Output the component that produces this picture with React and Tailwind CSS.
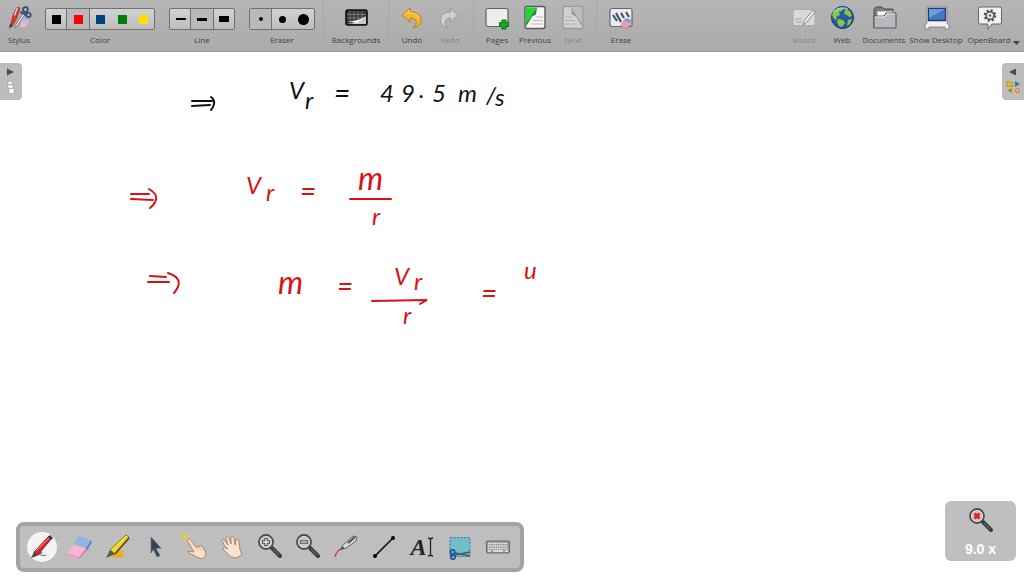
import { useState } from 'react';

const icon = 'h-7 w-7 shrink-0';

function StylusIcon() {
  return (
    <svg viewBox="0 0 28 28" className={icon} aria-hidden="true">
      <path d="M5 23l3-12 4-8 3 1-3 10-5 9z" fill="#d8392b" stroke="#8c2b24" strokeWidth=".6" />
      <path d="M9 11l3-8 1 1-3 8z" fill="#fff" opacity=".8" />
      <path d="M4 25l1-5 2 1z" fill="#333" />
      <path d="M10 22l9-14 2 1-8 12-3 3z" fill="#e9e9ed" stroke="#555" strokeWidth=".7" />
      <path d="M15 8l7 3" stroke="#35527c" strokeWidth="2" />
      <circle cx="20.5" cy="5.5" r="2.4" fill="none" stroke="#2c4a78" strokeWidth="1.6" />
      <circle cx="23.5" cy="11" r="2.2" fill="none" stroke="#2c4a78" strokeWidth="1.6" />
      <path d="M14 21l4-6 7 2-4 7-6-1z" fill="#f6b3cf" stroke="#b787a4" strokeWidth=".5" />
      <path d="M18 15l7 2-2 3-7-2z" fill="#b2c3e8" />
    </svg>
  );
}

function BackgroundsIcon() {
  return (
    <svg viewBox="0 0 28 28" className={icon} aria-hidden="true">
      <rect x="4" y="6" width="21" height="15" rx="1.5" fill="#3a3a3a" stroke="#111" strokeWidth="1.6" />
      <path d="M8 7v13M12 7v13M16 7v13M20 7v13M5 10.5h19M5 14h19" stroke="#8b8b8b" strokeWidth=".7" />
      <path d="M5 20q10-1 19-8v8z" fill="#c9c9c9" />
      <path d="M5 17q9 1 18-4l-8 6z" fill="#fff" />
    </svg>
  );
}

function UndoIcon() {
  return (
    <svg viewBox="0 0 28 28" className={icon} aria-hidden="true">
      <path d="M4.5 11L12 4v4c7 0 11 3 11 8 0 4-3 7-8 8 3-3 4-5 3-7-1-2-3-3-6-3v4z" fill="#fbb829" stroke="#c27a12" strokeLinejoin="round" />
      <path d="M6 11l5-5v3c5 0 9 1 10 5" fill="none" stroke="#ffe08a" />
    </svg>
  );
}

function RedoIcon() {
  return (
    <svg viewBox="0 0 28 28" className={icon} aria-hidden="true">
      <path d="M22 11l-7.500-7v4c-7 0-10 3-10 8 0 4 3 7 7 8-3-3-3-5-2-7 1-2 2-3 5-3v4z" fill="#cecece" stroke="#999" strokeLinejoin="round" />
    </svg>
  );
}

function PagesIcon() {
  return (
    <svg viewBox="0 0 28 28" className={icon} aria-hidden="true">
      <rect x="3" y="4.5" width="22" height="18" rx="2" fill="#ededed" stroke="#606060" strokeWidth="1.2" />
      <path d="M19 16h4v2.500h2.500v4H23V25h-4v-2.500h-2.500v-4H19z" fill="#16ac1e" stroke="#08650e" strokeWidth=".9" />
    </svg>
  );
}

function PreviousIcon() {
  return (
    <svg viewBox="0 0 28 28" className={icon} aria-hidden="true">
      <rect x="4" y="2.5" width="20" height="22" rx="2" fill="#f4f4f4" stroke="#5a5a5a" strokeWidth="1.4" />
      <path d="M5 3.500h11L5 22z" fill="#14dc28" />
      <path d="M16 3.500l-1 7-4 2-6 10V20z" fill="#4c6770" />
      <path d="M15 13h7M12 16.500h10M10 20h12" stroke="#bbb" />
    </svg>
  );
}

function NextIcon() {
  return (
    <svg viewBox="0 0 28 28" className={icon} aria-hidden="true">
      <rect x="4" y="2.5" width="20" height="22" rx="2" fill="#d1d1d1" stroke="#9b9b9b" strokeWidth="1.4" />
      <path d="M12 3.500h11V22z" fill="#bcbcbc" />
      <path d="M12 3.500l1 7 4 2 6 10V20z" fill="#969696" />
      <path d="M6 13h7M6 16.500h10M6 20h12" stroke="#b2b2b2" />
    </svg>
  );
}

function EraseIcon() {
  return (
    <svg viewBox="0 0 28 28" className={icon} aria-hidden="true">
      <rect x="3" y="4.5" width="22" height="18" rx="2" fill="#ededed" stroke="#666" strokeWidth="1.2" />
      <path d="M6 11l4 6M9 9l5 9M14 9l3 5M19 8l3 5" stroke="#3d5479" strokeWidth="2.2" />
      <path d="M14 21l4-6 7 2-4 7-6-1z" fill="#f29bb9" stroke="#b96884" strokeWidth=".5" />
      <path d="M19 14l6 2-2 3-6-2z" fill="#809fdd" />
    </svg>
  );
}

function BoardIcon() {
  return (
    <svg viewBox="0 0 28 28" className={icon} aria-hidden="true">
      <rect x="3" y="5.5" width="22" height="16" rx="1.5" fill="#d9d9d9" stroke="#aaa" />
      <path d="M5 15h7M6 18h6" stroke="#999" strokeWidth=".8" />
      <path d="M13 21l1-4L23 6l2 2-9 11z" fill="#eee" stroke="#888" />
    </svg>
  );
}

function WebIcon() {
  return (
    <svg viewBox="0 0 28 28" className={icon} aria-hidden="true">
      <circle cx="14.5" cy="13.5" r="11" fill="#245aa6" stroke="#153460" />
      <path d="M5 8c3-4 7-5 11-4l-2 3-3 1 1 3-4 2 1 3-3-1-2-4z" fill="#83c84a" />
      <path d="M17 5l5 2 2 5-3 1-2-2-3-1zM10 15l5 1 2 3-3 4-3-1-2-4zM20 16l4-1-2 5-3 2z" fill="#8cc63e" />
      <path d="M6 8q5-6 14-3" fill="none" stroke="#c1e4f7" strokeWidth="1.5" opacity=".7" />
    </svg>
  );
}

function DocumentsIcon() {
  return (
    <svg viewBox="0 0 28 28" className={icon} aria-hidden="true">
      <path d="M4 24V5l2-2h6l2 2h9v8" fill="#777a7e" stroke="#4a4a4a" />
      <path d="M7 7h16v9H7z" fill="#fff" stroke="#888" />
      <path d="M4 24V12h10l2-3h10v15z" fill="#b5b7bc" stroke="#55575b" strokeLinejoin="round" />
      <path d="M5 13h10l2-3h8" fill="none" stroke="#eee" />
    </svg>
  );
}

function DesktopIcon() {
  return (
    <svg viewBox="0 0 28 28" className={icon} aria-hidden="true">
      <path d="M5 3h20v16l2 2v4h-4v-2H7v2H3v-4l2-2z" fill="#f0f0f0" stroke="#777" strokeWidth=".8" />
      <path d="M6.500 4.500h17v12h-17z" fill="#3d79c7" stroke="#243c63" strokeWidth="1.3" />
      <path d="M7 5h16L7 14z" fill="#8ab6e7" opacity=".6" />
    </svg>
  );
}

function OpenBoardIcon() {
  return (
    <svg viewBox="0 0 28 28" className={icon} aria-hidden="true">
      <path d="M5 3h20q1.500 0 1.500 1.500v14Q26.500 20 25 20h-8l-4 5v-5H5q-1.500 0-1.500-1.500v-14Q3.500 3 5 3z" fill="#f1f1f1" stroke="#666" />
      <circle cx="15" cy="11.500" r="5" fill="none" stroke="#505050" strokeWidth="2.6" strokeDasharray="2 1.93" />
      <circle cx="15" cy="11.500" r="3.8" fill="#f1f1f1" stroke="#505050" strokeWidth="1.4" />
      <circle cx="15" cy="11.500" r="1.2" fill="#505050" />
    </svg>
  );
}

const toolIcon = 'h-8 w-8';

function PenIcon() {
  return (
    <svg viewBox="0 0 32 32" className={toolIcon} aria-hidden="true">
      <circle cx="16" cy="16" r="15" fill="#f3f3f3" />
      <path d="M7 26c5-2 11-5 8-5-3 1 0 5 5 3" fill="none" stroke="#777" strokeWidth="1.2" />
      <path d="M8 21L23 5l3 2-14 17z" fill="#d82525" stroke="#6d2222" strokeWidth=".8" />
      <path d="M10 20L24 6" stroke="#ff9b91" />
      <path d="M8 21l4 3-7 3z" fill="#444" />
      <path d="M22 6l2-2 3 3-2 2z" fill="#363b42" />
    </svg>
  );
}

function EraserIcon() {
  return (
    <svg viewBox="0 0 32 32" className={toolIcon} aria-hidden="true">
      <path d="M4 22l6-9 12 4-7 11-5-1-6-3z" fill="#f6b6d4" />
      <path d="M10 13l5-8 12 4-5 8z" fill="#8fb4e5" />
      <path d="M22 17l5-8 1 2-5 9z" fill="#5e86c7" />
      <path d="M22 17l1 3-8 8v-2z" fill="#de82b1" />
      <path d="M4 22l11 4v2l-5-1-6-3z" fill="#ee9cc3" />
    </svg>
  );
}

function MarkerIcon() {
  return (
    <svg viewBox="0 0 32 32" className={toolIcon} aria-hidden="true">
      <path d="M8 26c5-6 11-7 15-6l-3 3 4 2-5 2z" fill="#e8ad2c" />
      <path d="M8 19L24 4l3 2-14 17z" fill="#f4d31b" stroke="#77681b" strokeWidth=".8" />
      <path d="M10 19L25 5" stroke="#fff389" />
      <path d="M13 23L27 7" stroke="#4b4530" strokeWidth="1.5" />
      <path d="M8 19l5 4-9 4z" fill="#555b60" />
    </svg>
  );
}

function PointerIcon() {
  return (
    <svg viewBox="0 0 32 32" className={toolIcon} aria-hidden="true">
      <path d="M11 6l10 11-5 .5 4 7-3 1.500-3.500-7.500L11 22z" fill="#384352" stroke="#687180" strokeWidth=".7" />
    </svg>
  );
}

function PlayIcon() {
  return (
    <svg viewBox="0 0 32 32" className={toolIcon} aria-hidden="true">
      <path d="M7 1v10M2 6h10M3 2l8 8M11 2l-8 8" stroke="#e9cf3c" />
      <path d="M9 9c1-2 3-1 4 1l5 6 5-1 4 3 1 6-4 4-5-2-8-4-1-2 6 1z" fill="#fbe0c7" stroke="#ad8062" strokeWidth=".9" strokeLinejoin="round" />
      <path d="M18 16l2 3M21 16l2 3M25 17l1 3" stroke="#bb8d70" strokeWidth=".7" />
    </svg>
  );
}

function HandIcon() {
  return (
    <svg viewBox="0 0 32 32" className={toolIcon} aria-hidden="true">
      <path d="M9 16L6 9q1-2 3 1l3 4-2-7q1-3 3 0l2 6V6q2-2 3 1l1 7 1-5q2-2 3 1l1 9 2 5-6 3-5-1-8-8q0-3 3-1l2 1z" fill="#fbe2ca" stroke="#a77d60" strokeWidth=".9" strokeLinejoin="round" />
    </svg>
  );
}

function Magnifier({ sign }) {
  return (
    <svg viewBox="0 0 32 32" className={toolIcon} aria-hidden="true">
      <path d="M18 17l8 8" stroke="#3c3c3c" strokeWidth="4" strokeLinecap="round" />
      <path d="M19 18l6 6" stroke="#777" />
      <circle cx="12" cy="11" r="7" fill="#c8c8c8" stroke="#4c4c4c" strokeWidth="1.8" />
      <circle cx="12" cy="11" r="5.6" fill="none" stroke="#ddd" strokeWidth=".8" />
      {sign === 'plus' && <path d="M8 11h8M12 7v8" stroke="#505050" strokeWidth="3.4" />}
      {sign === 'plus' && <path d="M9 11h6M12 8v6" stroke="#eee" strokeWidth="1.4" />}
      {sign === 'minus' && <path d="M8 11h8" stroke="#505050" strokeWidth="3.4" />}
      {sign === 'minus' && <path d="M9 11h6" stroke="#eee" strokeWidth="1.2" />}
      {sign === 'cross' && <path d="M9.500 8.500l5 5M14.500 8.500l-5 5" stroke="#e82222" strokeWidth="3" />}
    </svg>
  );
}

function LaserIcon() {
  return (
    <svg viewBox="0 0 32 32" className={toolIcon} aria-hidden="true">
      <path d="M5 26c1-5 3-7 8-9" fill="none" stroke="#df4444" strokeWidth="1.6" />
      <path d="M12 15L23 5l4 1-1 4-11 8z" fill="#d5d5d0" stroke="#666" />
      <path d="M18 12l7-6" stroke="#4c5054" strokeWidth="2" />
      <path d="M12 15l3 3-5 1z" fill="#555" />
    </svg>
  );
}

function LineIcon() {
  return (
    <svg viewBox="0 0 32 32" className={toolIcon} aria-hidden="true">
      <path d="M7 25L25 7" stroke="#111" strokeWidth="1.7" />
      <circle cx="7" cy="25" r="2" />
      <circle cx="25" cy="7" r="2" />
    </svg>
  );
}

function TextIcon() {
  return (
    <span className="flex items-center justify-center font-['Liberation_Serif',serif] text-2xl leading-8 font-bold text-[#222] italic" aria-hidden="true">
      A
      <svg viewBox="0 0 7 20" className="h-5 w-[7px]">
        <path d="M1 1q2.500 0 2.500 2v14q0 2-2.500 2M6 1q-2.500 0-2.500 2v14q0 2 2.500 2" fill="none" stroke="#222" strokeWidth="1.3" />
      </svg>
    </span>
  );
}

function CaptureIcon() {
  return (
    <svg viewBox="0 0 32 32" className={toolIcon} aria-hidden="true">
      <rect x="6" y="6.5" width="20" height="19" fill="#72bdc9" stroke="#327cae" strokeDasharray="2 1.5" />
      <path d="M11 24l15-3M11 22l15 3" stroke="#4b5961" strokeWidth="1.7" />
      <circle cx="8.500" cy="21" r="2.2" fill="none" stroke="#1d529b" strokeWidth="1.7" />
      <circle cx="9" cy="26" r="2.2" fill="none" stroke="#1d529b" strokeWidth="1.7" />
    </svg>
  );
}

function KeyboardIcon() {
  return (
    <svg viewBox="0 0 32 32" className={toolIcon} aria-hidden="true">
      <rect x="4.5" y="10" width="23" height="12" rx="1" fill="#999" stroke="#666" />
      <path d="M6 12.500h20M6 15h20M6 17.500h20" stroke="#eee" strokeWidth="1.5" strokeDasharray="1.5 .7" />
      <path d="M6 20h3M11 20h10M23 20h3" stroke="#eee" strokeWidth="1.5" />
    </svg>
  );
}

const colors = [
  { name: 'Black', swatch: 'size-[9px] bg-black' },
  { name: 'Red', swatch: 'size-[9px] bg-[#fb0007]' },
  { name: 'Blue', swatch: 'size-[9px] bg-[#004080]' },
  { name: 'Green', swatch: 'size-[9px] bg-[#008000]' },
  { name: 'Yellow', swatch: 'size-[9px] bg-[#ffdd00]' },
];

const lines = [
  { name: 'Fine line', swatch: 'h-0.5 w-2.5 bg-black' },
  { name: 'Medium line', swatch: 'h-[3px] w-2.5 bg-black' },
  { name: 'Strong line', swatch: 'h-1.5 w-2.5 bg-black' },
];

const erasers = [
  { name: 'Small eraser', swatch: 'size-1 rounded-full bg-black' },
  { name: 'Medium eraser', swatch: 'size-[7px] rounded-full bg-black' },
  { name: 'Large eraser', swatch: 'size-[11px] rounded-full bg-black' },
];

const palette = [
  { name: 'Pen', Icon: PenIcon },
  { name: 'Eraser', Icon: EraserIcon },
  { name: 'Highlighter', Icon: MarkerIcon },
  { name: 'Select', Icon: PointerIcon },
  { name: 'Interact', Icon: PlayIcon },
  { name: 'Scroll page', Icon: HandIcon },
  { name: 'Zoom in', Icon: () => <Magnifier sign="plus" /> },
  { name: 'Zoom out', Icon: () => <Magnifier sign="minus" /> },
  { name: 'Laser pointer', Icon: LaserIcon },
  { name: 'Draw line', Icon: LineIcon },
  { name: 'Write text', Icon: TextIcon },
  { name: 'Capture', Icon: CaptureIcon },
  { name: 'Keyboard', Icon: KeyboardIcon },
];

function ToolButton({ label, Icon, width = 'w-[38px]', disabled = false }) {
  return (
    <button
      type="button"
      disabled={disabled}
      className={`${width} flex h-full shrink-0 flex-col items-center pt-1 text-[#3f3f3f] disabled:text-[#868686]`}
    >
      <Icon />
      <span className="whitespace-nowrap leading-4">{label}</span>
    </button>
  );
}

function ChoiceGroup({ label, options, initial }) {
  const [selected, setSelected] = useState(initial);
  return (
    <div role="group" aria-label={label} className="flex shrink-0 flex-col items-center pt-2 text-[#3f3f3f]">
      <div className="flex h-[22px] overflow-hidden rounded-xs border border-[#707070] bg-linear-to-b from-[#d2d2d2] to-[#bdbdbd]">
        {options.map((option, i) => (
          <button
            key={option.name}
            type="button"
            aria-label={option.name}
            aria-pressed={selected === i}
            onClick={() => setSelected(i)}
            className="flex w-[22px] items-center justify-center first:w-[21px] last:w-[21px] aria-pressed:bg-[#b9b9b9] aria-pressed:outline aria-pressed:outline-[#707070]"
          >
            <span className={option.swatch} />
          </button>
        ))}
      </div>
      <span className="mt-0.5 leading-4">{label}</span>
    </div>
  );
}

function Divider() {
  return <span className="h-full w-px shrink-0 bg-[#a8a8a8]" />;
}

function Toolbar() {
  return (
    <header className="flex h-[52px] shrink-0 justify-between border-b border-[#9a9a9a] bg-linear-to-b from-[#b5b5b5] to-[#ababab] font-['Open_Sans',sans-serif] text-[8px]">
      <div className="flex">
        <ToolButton label="Stylus" Icon={StylusIcon} />
        <div className="mr-2 ml-[7px] flex gap-3.5">
          <ChoiceGroup label="Color" options={colors} initial={1} />
          <ChoiceGroup label="Line" options={lines} initial={1} />
          <ChoiceGroup label="Eraser" options={erasers} initial={0} />
        </div>
        <Divider />
        <ToolButton label="Backgrounds" Icon={BackgroundsIcon} width="w-16" />
        <Divider />
        <div className="flex px-1">
          <ToolButton label="Undo" Icon={UndoIcon} />
          <ToolButton label="Redo" Icon={RedoIcon} disabled />
        </div>
        <Divider />
        <div className="flex px-1">
          <ToolButton label="Pages" Icon={PagesIcon} />
          <ToolButton label="Previous" Icon={PreviousIcon} />
          <ToolButton label="Next" Icon={NextIcon} disabled />
        </div>
        <Divider />
        <ToolButton label="Erase" Icon={EraseIcon} width="w-12" />
      </div>
      <div className="flex">
        <ToolButton label="Board" Icon={BoardIcon} disabled />
        <ToolButton label="Web" Icon={WebIcon} />
        <ToolButton label="Documents" Icon={DocumentsIcon} width="w-[46px]" />
        <ToolButton label="Show Desktop" Icon={DesktopIcon} width="w-[58px]" />
        <ToolButton label="OpenBoard" Icon={OpenBoardIcon} width="w-12" />
        <button type="button" aria-label="More" className="flex w-[11px] items-end pb-1.5">
          <svg viewBox="0 0 7 4" className="h-1 w-[7px]" aria-hidden="true">
            <path d="M0 0h7L3.500 4z" fill="#444" />
          </svg>
        </button>
      </div>
    </header>
  );
}

// Free canvas: every mark keeps the place where it was written
function Board() {
  return (
    <svg className="absolute inset-0 h-full w-full font-['Lato',sans-serif] italic" role="img" aria-label="Board page">
      <g fill="none" stroke="#111" strokeWidth="2" strokeLinecap="round">
        <path d="M192 49h20M192 54l18-1M211 45q4 3 3 7t-3 6" />
      </g>
      <g fill="#111" fontSize="24">
        <text x="289" y="47">V</text>
        <text x="305" y="57">r</text>
        <text x="334" y="51" fontSize="28">=</text>
        <text x="380 401 419 432 458 486 495" y="50 50 46 50 50 52 54">49.5m/s</text>
      </g>
      <g fill="none" stroke="#d81313" strokeWidth="2" strokeLinecap="round">
        <path d="M131 142h18M131 147l22 1M149 137q14 8 1 19" />
        <path d="M350 147h41" />
        <path d="M150 224l16 1M148 230h21M168 221q18 6 6 20" />
        <path d="M372 249l55-1-7 4" />
      </g>
      <g fill="#d81313" fontSize="24">
        <text x="246" y="142">V</text>
        <text x="266" y="149">r</text>
        <text x="300" y="149" fontSize="28">=</text>
        <text x="358" y="138" fontSize="32">m</text>
        <text x="372" y="173">r</text>
        <text x="278" y="242" fontSize="32">m</text>
        <text x="337" y="244" fontSize="28">=</text>
        <text x="394" y="233">V</text>
        <text x="414" y="238">r</text>
        <text x="403" y="272">r</text>
        <text x="481" y="251" fontSize="28">=</text>
        <text x="524" y="227">u</text>
      </g>
    </svg>
  );
}

function Palette() {
  const [active, setActive] = useState('Pen');
  return (
    <div role="toolbar" aria-label="Drawing tools" className="absolute bottom-1 left-4 flex h-[50px] items-center rounded-lg border-4 border-[#a3a3a3] bg-[#bebebe] px-[3px]">
      {palette.map(({ name, Icon }) => (
        <button
          key={name}
          type="button"
          aria-label={name}
          aria-pressed={active === name}
          onClick={() => setActive(name)}
          className="flex h-10 w-[38px] items-center justify-center"
        >
          <Icon />
        </button>
      ))}
    </div>
  );
}

export default function App() {
  return (
    <div className="flex h-screen flex-col bg-white">
      <Toolbar />
      <main className="relative flex-1 overflow-hidden">
        <Board />
        <button type="button" aria-label="Open pages" className="absolute top-[11px] left-0 h-[37px] w-[22px] rounded-r-sm bg-[#bdbdbd]">
          <svg viewBox="0 0 22 37" className="h-full w-full" aria-hidden="true">
            <path d="M7 5.500v7l7-3.500z" fill="#4d4d4d" />
            <path d="M8 18.500h4v3H8zM8 22h5v3H8zM9 25.500h5v5H9z" fill="#fff" stroke="#8a8a8a" strokeWidth=".4" />
          </svg>
        </button>
        <button type="button" aria-label="Open library" className="absolute top-[11px] right-0 h-[37px] w-[22px] rounded-l-sm bg-[#bdbdbd]">
          <svg viewBox="0 0 22 37" className="h-full w-full" aria-hidden="true">
            <path d="M14 5.500v7L7 9z" fill="#4d4d4d" />
            <path d="M5 18.500h2l1 1h3v4H5z" fill="#edb919" stroke="#a8810d" strokeWidth=".6" />
            <path d="M13 18v6l5-3z" fill="#1684bc" />
            <path d="M5 27.500l5-2.500v5z" fill="#879b2a" />
            <circle cx="15.500" cy="27.500" r="1.8" fill="#fff0bd" stroke="#ee8121" strokeWidth="1.5" />
          </svg>
        </button>
        <Palette />
        <button type="button" className="absolute right-2 bottom-[15px] flex h-[60px] w-[71px] flex-col items-center rounded-md bg-[#bfbfbf] pt-1 font-['Liberation_Sans',sans-serif] text-sm font-bold text-white">
          <Magnifier sign="cross" />
          <span className="leading-6">9.0 x</span>
        </button>
      </main>
    </div>
  );
}
